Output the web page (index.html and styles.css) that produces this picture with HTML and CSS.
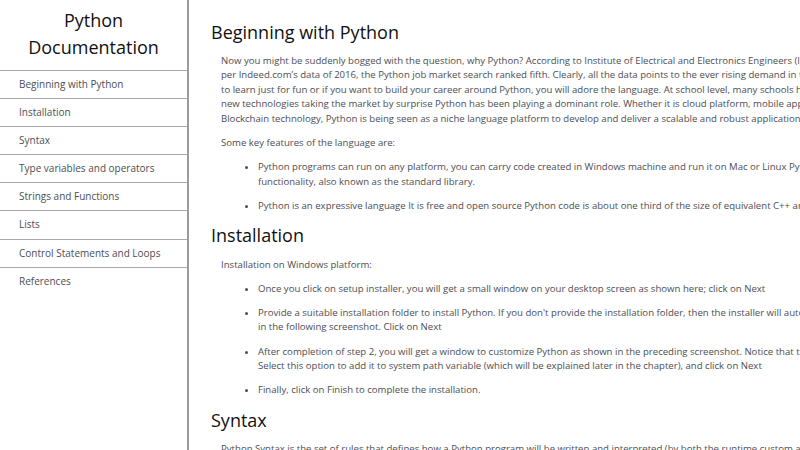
FILE: index.html
```html
<!DOCTYPE html>
<html lang="en">
<head>
<meta charset="utf-8">
<title>Python Documentation</title>
<link rel="stylesheet" href="styles.css">
</head>
<body>
<nav class="navbar">
  <header class="nav-title">Python Documentation</header>
  <ul class="nav-list">
    <li><a class="nav-link" href="#Beginning_with_Python">Beginning with Python</a></li>
    <li><a class="nav-link" href="#Installation">Installation</a></li>
    <li><a class="nav-link" href="#Syntax">Syntax</a></li>
    <li><a class="nav-link" href="#Type_variables_and_operators">Type variables and operators</a></li>
    <li><a class="nav-link" href="#Strings_and_Functions">Strings and Functions</a></li>
    <li><a class="nav-link" href="#Lists">Lists</a></li>
    <li><a class="nav-link" href="#Control_Statements_and_Loops">Control Statements and Loops</a></li>
    <li><a class="nav-link" href="#References">References</a></li>
  </ul>
</nav>
<main class="main-doc">
  <section class="main-section" id="Beginning_with_Python">
    <header class="section-title">Beginning with Python</header>
    <article class="section-body">
      <p>Now you might be suddenly bogged with the question, why Python? According to Institute of Electrical and Electronics Engineers (IEEE) 2016 ranking Python ranked third after C and Java. As<br>per Indeed.com’s data of 2016, the Python job market search ranked fifth. Clearly, all the data points to the ever rising demand in the job market for Python. Its a cool language if you want<br>to learn just for fun or if you want to build your career around Python, you will adore the language. At school level, many schools have started including Python programming for kids. With<br>new technologies taking the market by surprise Python has been playing a dominant role. Whether it is cloud platform, mobile app development, BigData, IoT with Raspberry Pi, or the new<br>Blockchain technology, Python is being seen as a niche language platform to develop and deliver a scalable and robust applications.</p>
      <p>Some key features of the language are:</p>
      <ul class="bullets">
        <li>Python programs can run on any platform, you can carry code created in Windows machine and run it on Mac or Linux Python has a large inbuilt library with prebuilt and portable<br>functionality, also known as the standard library.</li>
        <li>Python is an expressive language It is free and open source Python code is about one third of the size of equivalent C++ and Java code.</li>
      </ul>
    </article>
  </section>
  <section class="main-section" id="Installation">
    <header class="section-title">Installation</header>
    <article class="section-body">
      <p>Installation on Windows platform:</p>
      <ul class="bullets">
        <li>Once you click on setup installer, you will get a small window on your desktop screen as shown here; click on Next</li>
        <li>Provide a suitable installation folder to install Python. If you don't provide the installation folder, then the installer will automatically create an installation folder for you, as shown<br>in the following screenshot. Click on Next</li>
        <li>After completion of step 2, you will get a window to customize Python as shown in the preceding screenshot. Notice that the Add Python 3.x to PATH option has not been checked.<br>Select this option to add it to system path variable (which will be explained later in the chapter), and click on Next</li>
        <li>Finally, click on Finish to complete the installation.</li>
      </ul>
    </article>
  </section>
  <section class="main-section" id="Syntax">
    <header class="section-title">Syntax</header>
    <article class="section-body">
      <p>Python Syntax is the set of rules that defines how a Python program will be written and interpreted (by both the runtime custom and by human readers).</p>
    </article>
  </section>
</main>
</body>
</html>
```
FILE: styles.css
```css
html, body {
  margin: 0;
  height: 100%;
}
body {
  display: flex;
  overflow: hidden;
  font-family: "Open Sans", "Liberation Sans", sans-serif;
  color: #4d4e53;
  background: #fff;
}
.navbar {
  flex: none;
  width: 187px;
  height: 100vh;
  border-right: 2px solid #9a9a9a;
}
.nav-title {
  height: 70px;
  box-sizing: border-box;
  padding-top: 7px;
  text-align: center;
  font-size: 18px;
  line-height: 27px;
  color: #111;
}
.nav-list {
  list-style: none;
  margin: 0;
  padding: 0;
}
.nav-link {
  display: block;
  height: 27.1px;
  line-height: 27px;
  padding-left: 19px;
  border-top: 1px solid #a9a9a9;
  font-size: 10px;
  color: #4d4e53;
  text-decoration: none;
}
.main-doc {
  flex: none;
  width: 960px;
  padding: 10px 0 0 22px;
}
.section-title {
  font-size: 18px;
  line-height: 24.5px;
  color: #111;
  margin: 9.6px 0;
}
.section-body {
  width: 920px;
  margin-left: 10px;
  font-size: 9.6px;
  line-height: 14.6px;
}
.section-body p {
  margin: 9.6px 0;
}
.bullets {
  margin: 9.6px 0 0;
  padding-left: 37px;
}
.bullets li {
  margin-bottom: 9.6px;
}
```
